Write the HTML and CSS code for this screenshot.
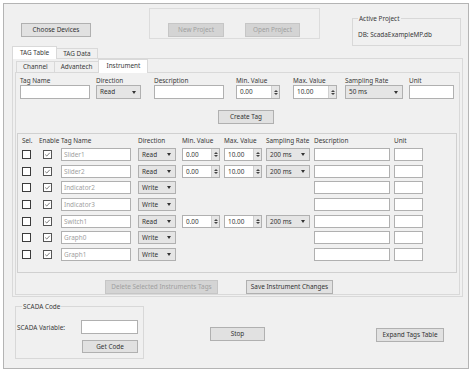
FILE: index.html
```html
<!DOCTYPE html>
<html>
<head>
	<title>SCADA Tags</title>
	<meta charset="utf-8">
	<meta name="viewport" content="width=device-width, initial-scale=1">
	<link rel="stylesheet" href="styles.css">
</head>
<body>
<div id="window">
	<div id="top">
		<button class="btn" id="chooseDevices">Choose Devices</button>
		<div id="projectBox">
			<button class="btn" id="newProject" disabled>New Project</button>
			<button class="btn" id="openProject" disabled>Open Project</button>
		</div>
		<fieldset class="group" id="activeBox">
			<legend>Active Project</legend>
			<span>DB: ScadaExampleMP.db</span>
		</fieldset>
	</div>

	<div class="tabHeads" id="mainTabs">
		<span class="tab sel">TAG Table</span><span class="tab">TAG Data</span>
	</div>
	<div class="page" id="tagPage">
		<div class="tabHeads" id="subTabs">
			<span class="tab">Channel</span><span class="tab">Advantech</span><span class="tab sel">Instrument</span>
		</div>
		<div class="page" id="instrPage">
			<div id="newTag">
				<span class="lbl">Tag Name</span>
				<span class="lbl">Direction</span>
				<span class="lbl">Description</span>
				<span class="lbl">Min. Value</span>
				<span class="lbl">Max. Value</span>
				<span class="lbl">Sampling Rate</span>
				<span class="lbl">Unit</span>
				<span class="txt big w70"></span>
				<span class="combo big w45">Read<i class="arrow"></i></span>
				<span class="txt big w70"></span>
				<span class="num big w44"><b>0.00</b><i class="spin"><i class="up"></i><i class="dn"></i></i></span>
				<span class="num big w44"><b>10.00</b><i class="spin"><i class="up"></i><i class="dn"></i></i></span>
				<span class="combo big w58">50 ms<i class="arrow"></i></span>
				<span class="txt big w45"></span>
			</div>
			<button class="btn" id="createTag">Create Tag</button>

			<div id="tagTable">
				<div id="tagGrid">
					<span class="head">Sel.</span><span class="head">Enable</span><span class="head">Tag Name</span><span class="head">Direction</span><span class="head">Min. Value</span><span class="head">Max. Value</span><span class="head">Sampling Rate</span><span class="head">Description</span><span class="head">Unit</span>

					<span class="chk"></span><span class="chk on"><svg viewBox="0 0 9 9"><path d="M1.6 4.6 3.6 6.5 7.4 2.3"/></svg></span>
					<span class="txt name">Slider1</span><span class="combo dir">Read<i class="arrow"></i></span>
					<span class="num val"><b>0.00</b><i class="spin"><i class="up"></i><i class="dn"></i></i></span>
					<span class="num val"><b>10.00</b><i class="spin"><i class="up"></i><i class="dn"></i></i></span>
					<span class="combo rate">200 ms<i class="arrow"></i></span><span class="txt desc"></span><span class="txt unit"></span>

					<span class="chk"></span><span class="chk on"><svg viewBox="0 0 9 9"><path d="M1.6 4.6 3.6 6.5 7.4 2.3"/></svg></span>
					<span class="txt name">Slider2</span><span class="combo dir">Read<i class="arrow"></i></span>
					<span class="num val"><b>0.00</b><i class="spin"><i class="up"></i><i class="dn"></i></i></span>
					<span class="num val"><b>10.00</b><i class="spin"><i class="up"></i><i class="dn"></i></i></span>
					<span class="combo rate">200 ms<i class="arrow"></i></span><span class="txt desc"></span><span class="txt unit"></span>

					<span class="chk"></span><span class="chk on"><svg viewBox="0 0 9 9"><path d="M1.6 4.6 3.6 6.5 7.4 2.3"/></svg></span>
					<span class="txt name">Indicator2</span><span class="combo dir">Write<i class="arrow"></i></span>
					<span></span><span></span><span></span><span class="txt desc"></span><span class="txt unit"></span>

					<span class="chk"></span><span class="chk on"><svg viewBox="0 0 9 9"><path d="M1.6 4.6 3.6 6.5 7.4 2.3"/></svg></span>
					<span class="txt name">Indicator3</span><span class="combo dir">Write<i class="arrow"></i></span>
					<span></span><span></span><span></span><span class="txt desc"></span><span class="txt unit"></span>

					<span class="chk"></span><span class="chk on"><svg viewBox="0 0 9 9"><path d="M1.6 4.6 3.6 6.5 7.4 2.3"/></svg></span>
					<span class="txt name">Switch1</span><span class="combo dir">Read<i class="arrow"></i></span>
					<span class="num val"><b>0.00</b><i class="spin"><i class="up"></i><i class="dn"></i></i></span>
					<span class="num val"><b>10.00</b><i class="spin"><i class="up"></i><i class="dn"></i></i></span>
					<span class="combo rate">200 ms<i class="arrow"></i></span><span class="txt desc"></span><span class="txt unit"></span>

					<span class="chk"></span><span class="chk on"><svg viewBox="0 0 9 9"><path d="M1.6 4.6 3.6 6.5 7.4 2.3"/></svg></span>
					<span class="txt name">Graph0</span><span class="combo dir">Write<i class="arrow"></i></span>
					<span></span><span></span><span></span><span class="txt desc"></span><span class="txt unit"></span>

					<span class="chk"></span><span class="chk on"><svg viewBox="0 0 9 9"><path d="M1.6 4.6 3.6 6.5 7.4 2.3"/></svg></span>
					<span class="txt name">Graph1</span><span class="combo dir">Write<i class="arrow"></i></span>
					<span></span><span></span><span></span><span class="txt desc"></span><span class="txt unit"></span>
				</div>
			</div>

			<div id="tableBtns">
				<button class="btn" id="deleteTags" disabled>Delete Selected Instruments Tags</button>
				<button class="btn" id="saveChanges">Save Instrument Changes</button>
			</div>
		</div>
	</div>

	<div id="bottom">
		<fieldset class="group" id="scadaBox">
			<legend>SCADA Code</legend>
			<div id="scadaGrid">
				<span class="lbl" id="varLbl">SCADA Variable:</span>
				<span class="txt big" id="varInput"></span>
				<button class="btn" id="getCode">Get Code</button>
			</div>
		</fieldset>
		<button class="btn" id="stopBtn">Stop</button>
		<button class="btn" id="expandBtn">Expand Tags Table</button>
	</div>
</div>
</body>
</html>
```

FILE: styles.css
```css
body {
	margin:0;
	padding:0;
	background-color:#ffffff;
	font-family: "Noto Sans", "Open Sans", sans-serif;
	font-size:6.4px;
	color:#383838;
}
#window {
	margin:3px 0 0 3px;
	width:466px;
	height:366px;
	box-sizing:border-box;
	border:1px solid #b4b4b4;
	background-color:#f0f0f0;
}

/* top strip */
#top {
	display:flex;
	align-items:flex-start;
	height:42px;
}
.btn {
	box-sizing:border-box;
	height:14px;
	padding:0;
	border:1px solid #b0b0b0;
	background-color:#e1e1e1;
	font-family:inherit;
	font-size:inherit;
	color:#333;
	line-height:12px;
	white-space:nowrap;
}
.btn:disabled {
	background-color:#d4d4d4;
	border-color:#c6c6c6;
	color:#a0a0a0;
}
#chooseDevices{margin:19px 0 0 17px;width:70px;}
#projectBox {
	box-sizing:border-box;
	margin:4px 0 0 58px;
	width:171px;
	height:31px;
	border:1px solid #dcdcdc;
	padding:14px 0 0 18px;
	display:flex;
	gap:21px;
}
#newProject{width:56px;}
#openProject{width:55px;}

fieldset.group {
	margin:0;
	padding:0 0 0 1px;
	border:1px solid #d8d8d8;
	min-width:0;
	box-sizing:border-box;
}
fieldset.group legend {
	padding:0 1px;
	margin-left:5px;
	line-height:9px;
}
#activeBox {
	margin:10px 0 0 32px;
	width:109px;
	padding:7px 0 6px 5px;
}
#activeBox legend{margin-left:0;}
#activeBox span{display:block;line-height:9px;}

/* tabs */
.tabHeads {
	display:flex;
	align-items:flex-end;
}
.tab {
	box-sizing:border-box;
	height:10px;
	padding:0 6px;
	border:1px solid #d9d9d9;
	border-bottom:none;
	margin-right:-1px;
	line-height:9px;
	background-color:#f0f0f0;
	white-space:nowrap;
}
.tab.sel {
	height:13px;
	margin-bottom:-1px;
	padding:0 7px;
	line-height:11px;
	background-color:#ffffff;
}
#mainTabs{height:12px;margin-left:8px;}
#subTabs{height:13px;margin-left:3px;}
#subTabs .tab{height:11px;line-height:10px;}
#subTabs .tab.sel{height:14px;line-height:12px;}
.page {
	box-sizing:border-box;
	border:1px solid #d9d9d9;
	background-color:#f0f0f0;
}
#tagPage {
	margin-left:8px;
	width:451px;
	height:239px;
}
#instrPage {
	margin-left:2px;
	width:445px;
	height:223px;
}

/* new tag form */
#newTag {
	display:grid;
	grid-template-columns:76px 58px 82px 57px 52px 64px 45px;
	grid-template-rows:9px 14px;
	margin:3px 0 0 4px;
}
.lbl{line-height:9px;white-space:nowrap;}
.txt, .combo, .num {
	box-sizing:border-box;
	height:13px;
	border:1px solid #b0b0b0;
	background-color:#ffffff;
	line-height:11px;
	white-space:nowrap;
}
.big{height:14px;line-height:12px;}
.txt{padding-left:2px;color:#a0a0a0;}
.combo {
	display:flex;
	justify-content:space-between;
	align-items:center;
	padding:0 4px 0 3px;
	background-color:#e5e5e5;
	color:#333;
}
.arrow {
	width:0;
	height:0;
	border-left:2.5px solid transparent;
	border-right:2.5px solid transparent;
	border-top:3px solid #333;
}
.num {
	display:flex;
	padding-left:3px;
}
.num b{flex:1;font-weight:normal;}
.spin {
	width:7px;
	display:flex;
	flex-direction:column;
	justify-content:center;
	align-items:center;
	gap:1px;
	background-color:#e6e6e6;
	border-left:1px solid #d0d0d0;
}
.spin .up{width:0;height:0;border-left:2px solid transparent;border-right:2px solid transparent;border-bottom:2px solid #444;}
.spin .dn{width:0;height:0;border-left:2px solid transparent;border-right:2px solid transparent;border-top:2px solid #444;}
.w70{width:70px;}
.w45{width:45px;}
.w44{width:44px;}
.w58{width:58px;}

#createTag{display:block;margin:11px 0 0 202px;width:56px;}

/* instruments table */
#tagTable {
	box-sizing:border-box;
	margin:9px 0 0 1px;
	width:440px;
	height:140px;
	border:1px solid #d0d0d0;
}
#tagGrid {
	display:grid;
	grid-template-columns:17px 22px 77px 44px 42px 42px 48px 80px 30px;
	grid-template-rows:8px;
	grid-auto-rows:13.67px;
	row-gap:3px;
	padding:3px 0 0 4px;
}
.head{line-height:8px;white-space:nowrap;}
.chk {
	box-sizing:border-box;
	width:9px;
	height:9px;
	margin-top:2px;
	border:1px solid #3c3c3c;
	background-color:#ffffff;
}
.chk.on{margin-left:4px;border-color:#555;}
.chk svg{display:block;width:7px;height:7px;fill:none;stroke:#555;stroke-width:1;}
.name{width:70px;}
.dir{width:38px;}
.val{width:38px;}
.rate{width:44px;}
.desc{width:76px;}
.unit{width:29px;}

#tableBtns {
	display:flex;
	gap:28px;
	margin:7px 0 0 89px;
}
#deleteTags{width:113px;}
#saveChanges{width:87px;}

/* bottom strip */
#bottom {
	display:flex;
	align-items:flex-start;
	padding-left:11px;
}
#scadaBox {
	margin-top:5px;
	width:129px;
	padding:9px 0 5px 1px;
}
#scadaGrid {
	display:grid;
	grid-template-columns:64px 57px;
	row-gap:6px;
}
#varLbl{align-self:center;color:#383838;}
#varInput{width:57px;}
#getCode{grid-column:2;width:56px;height:13px;margin-left:1px;}
#stopBtn{margin:30px 0 0 66px;width:55px;}
#expandBtn{margin:31px 0 0 111px;width:68px;}
```
